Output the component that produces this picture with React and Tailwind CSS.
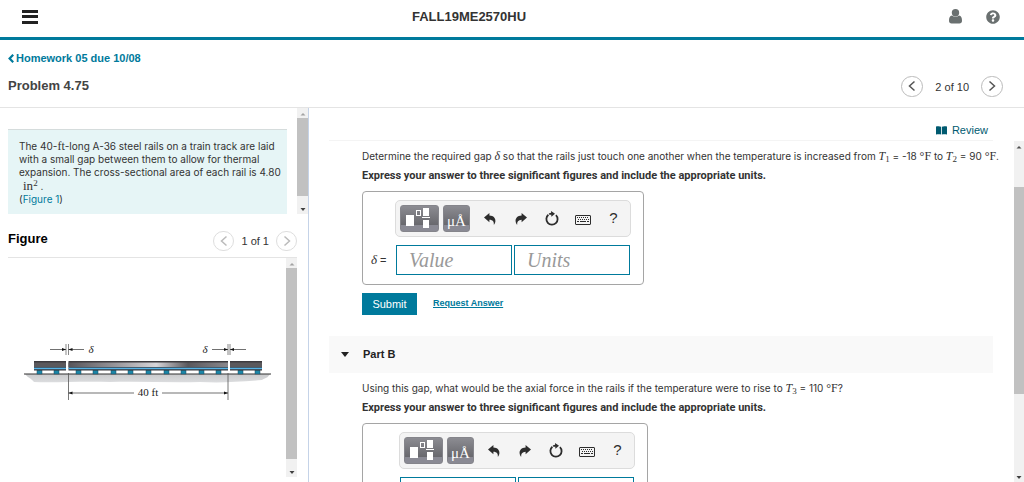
import React from 'react';
import { FaQuestionCircle } from 'react-icons/fa';

const MATH = "font-['Liberation_Serif',serif]";
const BODY = "font-['Inter',Arial,sans-serif]";

const Chevron = ({ flip, className }) => (
  <svg viewBox="0 0 10 12" className={className} fill="none" stroke="currentColor" strokeWidth="1.5">
    <path d={flip ? 'M2.5 1.5 L7.5 6 L2.5 10.5' : 'M7.5 1.5 L2.5 6 L7.5 10.5'} />
  </svg>
);

const UserIcon = () => (
  <svg viewBox="0 0 13 15" className="w-[13px] h-[15px]" fill="currentColor">
    <circle cx="6.5" cy="3.8" r="3.7" />
    <path d="M3 6.6 C4 7.4 5.1 7.8 6.5 7.8 C7.9 7.8 9 7.4 10 6.6 C12.3 7 13 9 13 11.8 C13 13.8 12 14.5 10.4 14.5 H2.6 C1 14.5 0 13.8 0 11.8 C0 9 0.7 7 3 6.6 Z" />
  </svg>
);

const BookIcon = () => (
  <svg viewBox="0 0 11 9" className="w-[11px] h-[9px]" fill="currentColor">
    <path d="M0 0.6 C2 0 3.7 0.1 5.1 0.7 V8.6 C3.7 8 2 8 0 8.5 Z" />
    <path d="M11 0.6 C9 0 7.3 0.1 5.9 0.7 V8.6 C7.3 8 9 8 11 8.5 Z" />
  </svg>
);

const TemplateIcon = () => (
  <svg viewBox="0 0 39 27" className="w-[39px] h-[27px] shrink-0" fill="white">
    <rect x="6" y="10" width="8" height="11" />
    <rect x="16.5" y="5.5" width="4" height="5" fill="none" stroke="white" />
    <rect x="23" y="3" width="6" height="8" />
    <rect x="22" y="12" width="8" height="1" />
    <rect x="23" y="15" width="6" height="8" />
  </svg>
);

const UndoIcon = ({ flip }) => (
  <svg viewBox="0 0 12 12" className="w-[12px] h-[12px]" fill="currentColor">
    <path
      transform={flip ? 'translate(12 0) scale(-1 1)' : undefined}
      d="M0 4.6 L5.4 0 V2.6 C9.6 2.8 11.6 5.4 11.4 8.2 C11.3 9.8 10.6 11 9.8 11.8 C10.2 8.6 8.8 6.8 5.4 6.7 V9.2 Z"
    />
  </svg>
);

const ResetIcon = () => (
  <svg viewBox="0 0 14 15" className="w-[14px] h-[15px]">
    <path d="M3.4 3.8 A5.6 5.6 0 1 0 10.9 4.1" fill="none" stroke="currentColor" strokeWidth="1.8" />
    <path d="M4.2 3.2 C5.2 2.6 6.2 2.5 7.6 2.7" fill="none" stroke="currentColor" strokeWidth="1.8" />
    <path d="M6 0 L10 2.8 L6.4 5.8 Z" fill="currentColor" />
  </svg>
);

const KeyboardIcon = () => (
  <svg viewBox="0 0 16 10" className="w-[16px] h-[10px] mt-[3px]" fill="none" stroke="currentColor">
    <rect x="0.5" y="0.5" width="15" height="9" rx="0.5" />
    <path d="M2 2.5 H14" strokeDasharray="1 1" />
    <path d="M3 4.5 H14" strokeDasharray="1 1" />
    <path d="M2 6.5 H4 M5 6.5 H11 M12 6.5 H14" />
  </svg>
);

const ScrollBar = ({ className, thumb, dimTop }) => (
  <div className={`flex flex-col items-center bg-[#f1f1f1] ${className}`} aria-hidden="true">
    <svg viewBox="0 0 10 10" className="w-[10px] h-[10px] shrink-0">
      <path d="M2.5 7.5 L5 5 L7.5 7.5 Z" fill={dimTop ? '#a3a3a3' : '#505050'} />
    </svg>
    <div className={`w-full bg-[#c1c1c1] ${thumb}`} />
    <svg viewBox="0 0 10 10" className="w-[10px] h-[10px] shrink-0 mt-auto">
      <path d="M2.5 4 L5 7 L7.5 4 Z" fill="#404040" />
    </svg>
  </div>
);

const ToolButton = ({ label, children }) => (
  <button type="button" aria-label={label} className="w-[31px] h-[27px] flex items-center justify-center text-[#2d2d2d]">
    {children}
  </button>
);

const GRAY_BUTTON =
  'h-[27px] rounded-[3px] border border-[#85858b] bg-[linear-gradient(#8c8c92,#68686d_76%,#8a8a94_78%)] text-white flex items-center justify-center overflow-hidden';

const Toolbar = () => (
  <div className="flex items-center w-[236px] h-[37px] pl-1 rounded-[5px] border border-[#dcdcdc] bg-[#f4f4f4]">
    <button type="button" aria-label="Templates" className={`w-[39px] shrink-0 ${GRAY_BUTTON}`}>
      <TemplateIcon />
    </button>
    <button type="button" aria-label="Symbols" className={`w-[27px] shrink-0 ml-1 pt-1 text-[15px] leading-4 ${MATH} ${GRAY_BUTTON}`}>
      μÅ
    </button>
    <div className="flex ml-1">
      <ToolButton label="Undo"><UndoIcon /></ToolButton>
      <ToolButton label="Redo"><UndoIcon flip /></ToolButton>
      <ToolButton label="Reset"><ResetIcon /></ToolButton>
      <ToolButton label="Keyboard shortcuts"><KeyboardIcon /></ToolButton>
      <ToolButton label="Help"><span className="text-[15px]">?</span></ToolButton>
    </div>
  </div>
);

const ANSWER_INPUT =
  "w-[116px] h-[30px] border border-[#007a9c] px-3 text-[20px] italic placeholder:text-[#999] font-['Liberation_Serif',serif] outline-none";

const AnswerBox = ({ id, symbol, name, labelWidth }) => (
  <div className="w-fit mt-[7px] p-2 pb-[9px] pr-3 rounded-[4px] border border-[#a5a5a5]">
    <div className="flex">
      <div className={labelWidth} />
      <Toolbar />
    </div>
    <div className="flex items-center mt-2">
      <label htmlFor={id} className={`${labelWidth} text-[11px]`}>
        {symbol && <><i className={`${MATH} text-[13px]`}>{symbol}</i> =</>}
      </label>
      <div className="flex gap-[2px] pl-px">
        <input id={id} aria-label={name} placeholder="Value" className={ANSWER_INPUT} />
        <input aria-label="Units" placeholder="Units" className={ANSWER_INPUT} />
      </div>
    </div>
  </div>
);

const Temp = ({ n }) => (
  <span className={`${MATH} text-[12px] leading-3`}>
    <i>T</i><sub className="text-[9px]">{n}</sub>
  </span>
);

const DegF = () => <span className={`${MATH} text-[12px] leading-3`}>°F</span>;

const TIES = [19, 36, 58, 75, 93, 110, 128, 146, 163, 181, 198, 220, 237];

const Arrow = ({ from, to, y }) => {
  const d = to > from ? -4 : 4;
  return (
    <g>
      <line x1={from} x2={to} y1={y} y2={y} stroke="#333" strokeWidth="0.7" />
      <path d={`M${to} ${y} L${to + d} ${y - 1.6} V${y + 1.6} Z`} fill="#111" />
    </g>
  );
};

const Rail = ({ x, width, fill }) => (
  <g>
    <rect x={x} y="21" width={width} height="9.5" fill="#3c3a3e" />
    <rect x={x} y="22.5" width={width} height="4.5" fill={fill} />
    <rect x={x} y="27.7" width={width} height="1.5" fill="#55b4e8" />
  </g>
);

const TrackFigure = () => (
  <svg viewBox="0 0 256 64" className="w-[256px] h-[64px]" role="img" aria-label="Rails on a train track">
    <defs>
      <linearGradient id="steel">
        <stop offset="0" stopColor="#56545a" />
        <stop offset="0.3" stopColor="#99979c" />
        <stop offset="0.55" stopColor="#d8d6da" />
        <stop offset="0.75" stopColor="#59575c" />
        <stop offset="1" stopColor="#8a888d" />
      </linearGradient>
      <linearGradient id="ground" x1="0" y1="0" x2="0" y2="1">
        <stop offset="0" stopColor="#c9cacc" />
        <stop offset="1" stopColor="#dcdddf" />
      </linearGradient>
    </defs>
    <path d="M5 34 H250 C248 38 245 38 242 40 C220 42 200 43 180 42 C150 43 120 41 90 42 C60 41 35 43 14 42 C11 38 8 38 5 34 Z" fill="url(#ground)" />
    <line x1="4" x2="251" y1="34" y2="34" stroke="#333" />
    {TIES.map((x) => (
      <rect key={x} x={x - 2} y="30" width="5" height="4" fill="#1b86a8" stroke="#1d4a5c" strokeWidth="0.5" />
    ))}
    <Rail x={14} width={32} fill="#5a585c" />
    <Rail x={48.5} width={159.5} fill="url(#steel)" />
    <Rail x={210} width={32} fill="#5a585c" />
    <path d="M46 4 V15 M48.5 4 V15 M208 4 V15 M210 4 V15" stroke="#555" strokeWidth="0.7" />
    <path d="M48.5 33 V60 M208 33 V60" stroke="#555" strokeWidth="0.8" />
    <Arrow from={30} to={46} y={9.5} />
    <Arrow from={64} to={48.5} y={9.5} />
    <Arrow from={192} to={208} y={9.5} />
    <Arrow from={226} to={210} y={9.5} />
    <Arrow from={114} to={48.5} y={53} />
    <Arrow from={142} to={208} y={53} />
    <g fontFamily="Liberation Serif, serif" fontSize="11" fill="#222" textAnchor="middle">
      <text x="71" y="13" fontStyle="italic">δ</text>
      <text x="185" y="13" fontStyle="italic">δ</text>
      <text x="128" y="56">40 ft</text>
    </g>
  </svg>
);

const LeftPane = () => (
  <aside className="w-[309px] shrink-0 flex flex-col border-r border-[#c5d3e8]">
    <div className="flex h-[106px] shrink-0">
      <div className="flex-1 min-w-0 pl-2 pr-[10px] pt-[21px]">
        <div className={`h-[85px] pt-[10px] pl-[11px] bg-[#e6f5f6] border-t border-[#d5dcdc] text-[10px] leading-[13px] text-[#333] ${BODY}`}>
          The 40-<span className="font-['Liberation_Serif',serif] text-[12px]">ft</span>-long A-36 steel rails on a train track are laid<br />
          with a small gap between them to allow for thermal<br />
          expansion. The cross-sectional area of each rail is 4.80<br />
          <span className="pl-1 font-['Liberation_Serif',serif] text-[13px]">in<sup className="text-[9px]">2</sup></span> .<br />
          (<a href="#figure" className="text-[#007a9c]">Figure 1</a>)
        </div>
      </div>
      <ScrollBar className="w-[11px]" thumb="h-[78px]" dimTop />
    </div>
    <div className="flex items-center justify-between h-[44px] shrink-0 mx-2 mr-[11px] pt-[10px] border-b border-[#e4e4e4]">
      <h2 className="pb-1 text-[13px] font-bold text-black">Figure</h2>
      <div className="flex items-center gap-[7px] text-[11px]">
        <button type="button" aria-label="Previous figure" className="w-[21px] h-[20px] rounded-full border border-[#dedede] text-[#bbb] flex items-center justify-center">
          <Chevron className="w-[10px] h-[12px]" />
        </button>
        <span className="pt-[2px]">1 of 1</span>
        <button type="button" aria-label="Next figure" className="w-[21px] h-[20px] rounded-full border border-[#dedede] text-[#bbb] flex items-center justify-center">
          <Chevron flip className="w-[10px] h-[12px]" />
        </button>
      </div>
    </div>
    <div id="figure" className="flex flex-1 min-h-0 pb-[5px] mr-[11px]">
      <div className="flex-1 pl-5 pt-[82px]">
        <TrackFigure />
      </div>
      <ScrollBar className="w-[11px]" thumb="flex-1 mb-2" dimTop />
    </div>
  </aside>
);

const Question = ({ children }) => (
  <>
    <p className={`text-[10px] leading-4 whitespace-nowrap ${BODY}`}>{children}</p>
    <p className="mt-1 text-[11px] leading-4 font-bold font-['Roboto',Arial,sans-serif]">
      Express your answer to three significant figures and include the appropriate units.
    </p>
  </>
);

const RightPane = () => (
  <main className="flex-1 min-w-0 flex flex-col">
    <div className="h-[33px] shrink-0 ml-5 mr-[31px] pt-[12px] pr-[5px] flex items-center justify-end border-b border-[#f4f4f4]">
      <a href="#review" className="flex items-center gap-[5px] text-[11px] text-[#005a70]">
        <BookIcon />
        Review
      </a>
    </div>
    <div className="flex flex-1 min-h-0">
      <div className="flex-1 min-w-0 overflow-hidden pl-5 pr-[21px]">
        <section className="pl-[33px] pt-[7px]">
          <Question>
            Determine the required gap <i className={`${MATH} text-[12px] leading-3`}>δ</i> so that the rails just touch one another when the temperature is increased from <Temp n="1" /> = -18 <DegF /> to <Temp n="2" /> = 90 <DegF />.
          </Question>
          <AnswerBox id="delta" symbol="δ" labelWidth="w-[24px]" />
          <div className="flex items-center gap-4 mt-2">
            <button type="button" className="w-[55px] h-[22px] bg-[#007a9c] text-white text-[11px]">Submit</button>
            <a href="#answer" className="text-[9px] font-bold text-[#007a9c] underline">Request Answer</a>
          </div>
        </section>
        <button type="button" className="w-full h-[37px] mt-[21px] pl-3 flex items-center gap-[14px] bg-[#f9f9f9] text-[11px] font-bold text-[#222]">
          <svg viewBox="0 0 8 5" className="w-[8px] h-[5px]" fill="currentColor">
            <path d="M0 0 H8 L4 5 Z" />
          </svg>
          Part B
        </button>
        <section className="pl-[33px] pt-[7px]">
          <Question>
            Using this gap, what would be the axial force in the rails if the temperature were to rise to <Temp n="3" /> = 110 <DegF />?
          </Question>
          <AnswerBox id="force" name="Axial force" labelWidth="w-[28px]" />
        </section>
      </div>
      <ScrollBar className="w-[10px]" thumb="mt-9 h-[207px]" />
    </div>
  </main>
);

export default function App() {
  return (
    <div className="h-screen flex flex-col overflow-hidden bg-white text-[#333] font-['Liberation_Sans',Arial,sans-serif]">
      <header className="grid grid-cols-3 items-center h-[40px] shrink-0 border-b-[3px] border-[#007a9c] pl-[22px] pr-6">
        <button type="button" aria-label="Menu" className="w-4 h-[14px] mb-1 flex flex-col justify-between">
          <span className="w-full h-[3px] bg-[#222]" />
          <span className="w-full h-[3px] bg-[#222]" />
          <span className="w-full h-[3px] bg-[#222]" />
        </button>
        <h1 className="mb-1 text-center text-[13px] font-bold -ml-[84px]">FALL19ME2570HU</h1>
        <div className="flex items-center justify-end gap-6 mb-1 text-[#6a7070]">
          <button type="button" aria-label="Account"><UserIcon /></button>
          <button type="button" aria-label="Help"><FaQuestionCircle className="w-[14px] h-[14px]" /></button>
        </div>
      </header>
      <div className="flex justify-between h-[68px] shrink-0 px-2 pt-[10px] border-b border-[#e4e4e4]">
        <div>
          <a href="#homework" className="flex items-center text-[11px] leading-4 font-bold text-[#007a9c]">
            <svg viewBox="0 0 6 9" className="w-[6px] h-[9px] mr-[2px]" fill="none" stroke="currentColor" strokeWidth="2.2">
              <path d="M5.2 0.8 L1.6 4.5 L5.2 8.2" />
            </svg>
            Homework 05 due 10/08
          </a>
          <h2 className="mt-3 text-[13px] leading-4 font-bold text-[#444]">Problem 4.75</h2>
        </div>
        <nav className="flex items-center gap-3 h-6 mt-6 mr-[13px] text-[11px]">
          <button type="button" aria-label="Previous problem" className="w-[22px] h-[21px] rounded-full border border-[#bbb] flex items-center justify-center text-[#555]">
            <Chevron className="w-[10px] h-[12px]" />
          </button>
          <span className="pt-[2px]">2 of 10</span>
          <button type="button" aria-label="Next problem" className="w-[22px] h-[21px] rounded-full border border-[#bbb] flex items-center justify-center text-[#555]">
            <Chevron flip className="w-[10px] h-[12px]" />
          </button>
        </nav>
      </div>
      <div className="flex flex-1 min-h-0">
        <LeftPane />
        <RightPane />
      </div>
    </div>
  );
}
